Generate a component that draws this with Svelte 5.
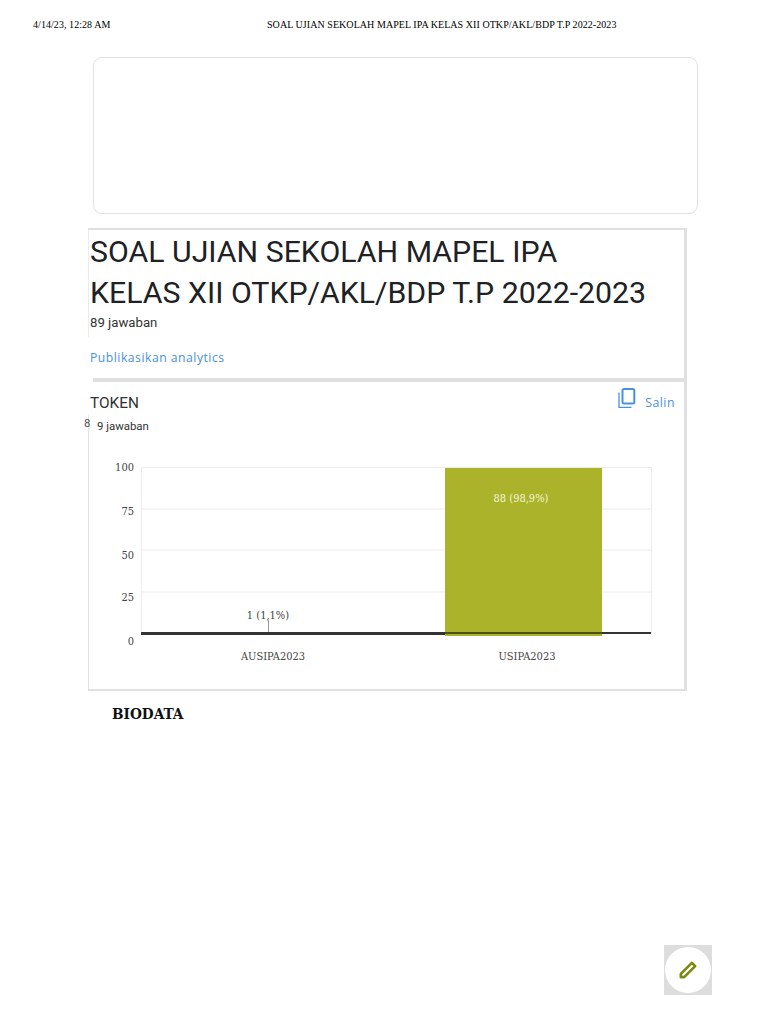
<script lang="ts">
	const ticks = [
		{ label: "100", y: 37, grid: 33.5 },
		{ label: "75", y: 81, grid: 75 },
		{ label: "50", y: 125, grid: 116 },
		{ label: "25", y: 167, grid: 158 },
		{ label: "0", y: 211, grid: 0 }
	];
</script>

<div class="page">
	<header class="print-head">
		<span class="date">4/14/23, 12:28 AM</span>
		<span class="doc-title">SOAL UJIAN SEKOLAH MAPEL IPA KELAS XII OTKP/AKL/BDP T.P 2022-2023</span>
	</header>

	<div class="ad-slot"></div>

	<section class="form-card">
		<div class="summary">
			<div class="summary-head">
				<h1>SOAL UJIAN SEKOLAH MAPEL IPA<br />KELAS XII OTKP/AKL/BDP T.P 2022-2023</h1>
				<div class="count">89 jawaban</div>
			</div>
			<a class="publish" href="#top">Publikasikan analytics</a>
		</div>
		<div class="divider"></div>
		<div class="question">
			<div class="q-head">
				<h2>TOKEN</h2>
				<button class="copy" type="button">
					<svg width="18" height="21" viewBox="0 0 18 21" fill="none" stroke="#4a90e2">
						<rect x="4.500" y="1" width="11.800" height="14.500" rx="1.500" stroke-width="2" />
						<path d="M1 4.500v14.800h12.500" stroke-width="1.300" />
					</svg>
					<span>Salin</span>
				</button>
			</div>
			<div class="q-body">
				<div class="q-count"><span class="clipped">8</span>9 jawaban</div>
				<svg class="chart" width="594" height="240" viewBox="0 0 594 240">
					{#each ticks as t}
						{#if t.grid}<line x1="52" x2="562" y1={t.grid} y2={t.grid} class="grid" />{/if}
						<text x="45" y={t.y} text-anchor="end" class="tick">{t.label}</text>
					{/each}
					<line x1="52.500" x2="52.500" y1="33" y2="199" class="grid" />
					<line x1="562.500" x2="562.500" y1="33" y2="199" class="grid" />
					<rect x="356" y="34" width="157" height="168" fill="#abb32b" />
					<rect x="52" y="198" width="304" height="3" fill="#333333" />
					<rect x="356" y="198" width="157" height="2" fill="#4a4f1a" />
					<rect x="513" y="198" width="49" height="2" fill="#333333" />
					<line x1="179.500" x2="179.500" y1="186" y2="198" stroke="#999999" />
					<text x="179" y="185" text-anchor="middle" class="label">1 (1,1%)</text>
					<text x="432" y="68" text-anchor="middle" class="label light">88 (98,9%)</text>
					<text x="184" y="226" text-anchor="middle" class="label">AUSIPA2023</text>
					<text x="438" y="226" text-anchor="middle" class="label">USIPA2023</text>
				</svg>
			</div>
		</div>
	</section>

	<h3 class="biodata">BIODATA</h3>

	<button class="fab-wrap" type="button" aria-label="Edit">
		<span class="fab">
			<svg width="22" height="22" viewBox="0 0 20 20" fill="none">
				<path d="M3.500 13.500 13.500 3.500l3 3L6.500 16.500h-3z" stroke="#7a8a10" stroke-width="2.400" stroke-linejoin="round" />
			</svg>
		</span>
	</button>
</div>

<style>
	:global(body) {
		background: #ffffff;
	}

	.page {
		width: 768px;
		height: 1024px;
		box-sizing: border-box;
		padding-top: 17px;
		position: relative;
		overflow: hidden;
		color: #202124;
	}

	.print-head {
		display: flex;
		padding-left: 33px;
		height: 14px;
		align-items: center;
		font-family: "Liberation Serif", serif;
		font-size: 10px;
		letter-spacing: 0.06px;
		color: #000000;
	}

	.date {
		width: 234px;
	}

	.ad-slot {
		width: 603px;
		height: 155px;
		margin: 26px 0 0 93px;
		border: 1px solid #e2e2e2;
		border-radius: 9px;
	}

	.form-card {
		width: 599px;
		box-sizing: border-box;
		margin: 14px 0 0 88px;
		height: 463px;
		border-style: solid;
		border-color: #e0e0e0;
		border-width: 2px 3px 2px 0;
		display: flex;
		flex-direction: column;
	}

	.summary {
		height: 148px;
	}

	.summary-head {
		height: 107px;
		padding-left: 1px;
		border-left: 1px solid #ececec;
	}

	h1 {
		margin: 0;
		padding-top: 1px;
		font-family: Roboto, sans-serif;
		font-weight: 400;
		font-size: 30.270px;
		line-height: 41px;
		white-space: nowrap;
		color: #202124;
	}

	.count {
		margin-top: 1px;
		font-family: Roboto, sans-serif;
		font-size: 13.200px;
		line-height: 18px;
		color: #333333;
	}

	.publish {
		display: block;
		margin: 11px 0 0 2px;
		font-family: "Open Sans", sans-serif;
		font-size: 12.200px;
		letter-spacing: 0.5px;
		line-height: 20px;
		color: #4a90e2;
		text-decoration: none;
	}

	.divider {
		height: 4px;
		margin-left: 5px;
		background: #e0e0e0;
	}

	.question {
		flex: 1;
		display: flex;
		flex-direction: column;
	}

	.q-head {
		display: flex;
		justify-content: space-between;
		padding: 6px 9px 0 2px;
		height: 33px;
		box-sizing: border-box;
	}

	h2 {
		margin: 5px 0 0;
		font-family: Roboto, sans-serif;
		font-weight: 400;
		font-size: 15.400px;
		line-height: 20px;
		color: #333333;
	}

	.copy {
		display: flex;
		gap: 9px;
		align-items: flex-start;
		padding: 0;
		border: 0;
		background: none;
		font-family: "Open Sans", sans-serif;
		font-size: 12.300px;
		letter-spacing: 0.5px;
		color: #4a90e2;
	}

	.copy span {
		margin-top: 6px;
	}

	.q-body {
		flex: 1;
		border-left: 1px solid #e4e4e4;
	}

	.q-count {
		position: relative;
		padding-left: 8px;
		margin-top: 3px;
		font-family: Roboto, sans-serif;
		font-size: 11.400px;
		line-height: 16px;
		color: #333333;
	}

	.clipped {
		position: absolute;
		left: -5px;
		top: -3px;
		color: #555555;
	}

	.chart {
		display: block;
	}

	.grid {
		stroke: #ececec;
		stroke-width: 1;
	}

	.tick,
	.label {
		font-family: "DejaVu Serif", serif;
		font-size: 11px;
		font-stretch: condensed;
		fill: #444444;
	}

	.light {
		fill: #f4f6d8;
	}

	.biodata {
		margin: 14px 0 0 112px;
		font-family: "DejaVu Serif", serif;
		font-weight: 700;
		font-size: 15.200px;
		font-stretch: condensed;
		line-height: 18px;
		color: #111111;
	}

	.fab-wrap {
		position: absolute;
		left: 664px;
		top: 945px;
		width: 48px;
		height: 50px;
		padding: 0;
		border: 0;
		background: #dddddd;
		display: flex;
		align-items: center;
		justify-content: center;
	}

	.fab {
		width: 46px;
		height: 46px;
		border-radius: 50%;
		background: #ffffff;
		display: flex;
		align-items: center;
		justify-content: center;
	}
</style>
